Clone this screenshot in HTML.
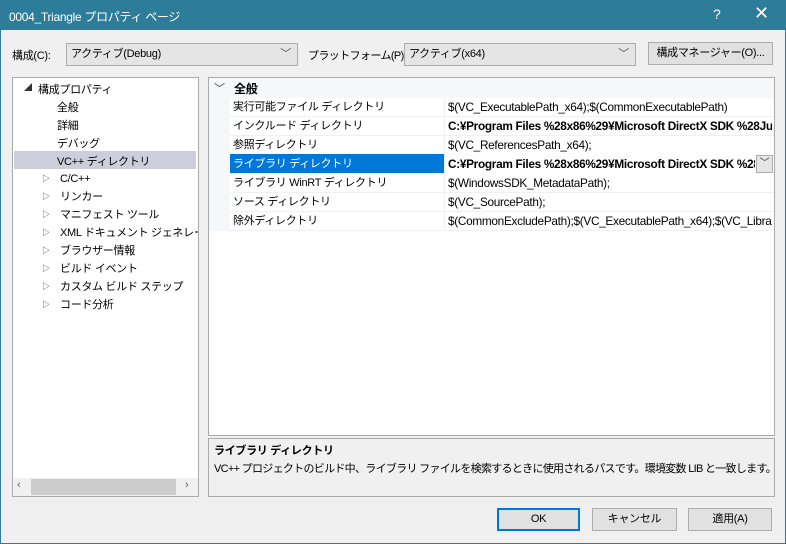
<!DOCTYPE html>
<html><head><meta charset="utf-8"><style>
*{margin:0;padding:0;box-sizing:border-box}
body{width:786px;height:544px;background:#f0f0f0;font-family:"Liberation Sans","Noto Sans CJK JP",sans-serif;font-size:11px;letter-spacing:-0.3px;color:#000;position:relative;overflow:hidden}
.a{position:absolute;white-space:nowrap}
#win{position:absolute;left:0;top:0;width:786px;height:544px;border:1px solid #2d7d9a}
.title{left:0;top:0;width:786px;height:30px;background:#2d7d9a;color:#fff}
.combo{background:#e5e5e5;border:1px solid #adadad;height:23px;line-height:21px;padding-left:4px}
.btn{background:#e1e1e1;border:1px solid #adadad;text-align:center;line-height:21px;height:23px}
.lat{font-size:11.8px;letter-spacing:-0.3px}
.bold{font-weight:bold}
.tree div{height:18px;line-height:18px;overflow:hidden}
.tr{font-size:8px;color:#333;display:inline-block;width:18px;vertical-align:top}
</style></head><body>
<div id="win"></div>
<div class="a title"><span class="a" style="left:9px;top:8px;font-size:12px">0004_Triangle プロパティ ページ</span>
<span class="a" style="left:713px;top:6px;font-size:14px">?</span>
<span class="a" style="left:754px;top:3px;font-size:18px">✕</span></div>

<span class="a" style="left:12px;top:47px">構成(C):</span>
<div class="a combo" style="left:66px;top:43px;width:232px">アクティブ(Debug)<span class="a" style="right:6px;top:0;color:#555">﹀</span></div>
<span class="a" style="left:308px;top:47px;letter-spacing:-0.6px">プラットフォーム(P):</span>
<div class="a combo" style="left:404px;top:43px;width:232px">アクティブ(x64)<span class="a" style="right:6px;top:0;color:#555">﹀</span></div>
<div class="a btn" style="left:648px;top:42px;width:125px">構成マネージャー(O)...</div>

<div class="a" style="left:12px;top:77px;width:187px;height:420px;background:#fff;border:1px solid #aaa"></div>
<div class="a" style="left:14px;top:151px;width:182px;height:18px;background:#cccedb"></div>
<span class="a" style="left:24px;top:82px;font-size:8px;color:#333">◢</span>
<span class="a" style="left:38px;top:81px">構成プロパティ</span>
<span class="a" style="left:57px;top:99px">全般</span>
<span class="a" style="left:57px;top:117px">詳細</span>
<span class="a" style="left:57px;top:135px">デバッグ</span>
<span class="a" style="left:57px;top:153px">VC++ ディレクトリ</span>
<div class="a tree" style="left:42px;top:170px;width:156px;overflow:hidden">
<div><span class="tr">▷</span>C/C++</div><div><span class="tr">▷</span>リンカー</div><div><span class="tr">▷</span>マニフェスト ツール</div><div><span class="tr">▷</span>XML ドキュメント ジェネレーター</div><div><span class="tr">▷</span>ブラウザー情報</div><div><span class="tr">▷</span>ビルド イベント</div><div><span class="tr">▷</span>カスタム ビルド ステップ</div><div><span class="tr">▷</span>コード分析</div></div>
<div class="a" style="left:13px;top:478px;width:185px;height:18px;background:#f0f0f0"></div>
<div class="a" style="left:31px;top:479px;width:145px;height:16px;background:#cdcdcd"></div>
<span class="a" style="left:17px;top:479px;color:#606060">‹</span>
<span class="a" style="left:185px;top:479px;color:#606060">›</span>

<div class="a" style="left:208px;top:77px;width:567px;height:359px;background:#fff;border:1px solid #aaa"></div>
<div class="a" style="left:209px;top:78px;width:565px;height:20px;background:#f5f7fa"></div>
<div class="a" style="left:209px;top:98px;width:21px;height:133px;background:#f5f7fa"></div>
<span class="a" style="left:214px;top:80px;color:#444">﹀</span>
<span class="a bold" style="left:234px;top:80px;font-size:12px">全般</span>
<div class="a" style="left:444px;top:98px;width:1px;height:133px;background:#eef0f3"></div>
<div class="a" style="left:230px;top:154px;width:214px;height:19px;background:#0078d7"></div>
<div class="a" style="left:233px;top:98px;line-height:19px">
<div>実行可能ファイル ディレクトリ</div><div>インクルード ディレクトリ</div><div>参照ディレクトリ</div><div style="color:#fff">ライブラリ ディレクトリ</div><div>ライブラリ WinRT ディレクトリ</div><div>ソース ディレクトリ</div><div>除外ディレクトリ</div></div>
<div class="a lat" style="left:448px;top:98px;line-height:19px;width:324px;overflow:hidden">
<div>$(VC_ExecutablePath_x64);$(CommonExecutablePath)</div><div class="bold">C:¥Program Files %28x86%29¥Microsoft DirectX SDK %28Ju</div><div>$(VC_ReferencesPath_x64);</div><div class="bold" style="width:307px;overflow:hidden">C:¥Program Files %28x86%29¥Microsoft DirectX SDK %28Ju</div><div>$(WindowsSDK_MetadataPath);</div><div>$(VC_SourcePath);</div><div>$(CommonExcludePath);$(VC_ExecutablePath_x64);$(VC_Libra</div></div>
<div class="a" style="left:230px;top:116px;width:544px;border-top:1px solid #eef0f3;height:0"></div>
<div class="a" style="left:230px;top:135px;width:544px;border-top:1px solid #eef0f3;height:0"></div>
<div class="a" style="left:230px;top:192px;width:544px;border-top:1px solid #eef0f3;height:0"></div>
<div class="a" style="left:230px;top:211px;width:544px;border-top:1px solid #eef0f3;height:0"></div>
<div class="a" style="left:230px;top:230px;width:544px;border-top:1px solid #eef0f3;height:0"></div>
<div class="a" style="left:756px;top:155px;width:17px;height:18px;background:#e5e5e5;border:1px solid #adadad;font-size:10px;text-align:center;line-height:16px;color:#333">﹀</div>

<div class="a" style="left:208px;top:438px;width:567px;height:59px;border:1px solid #aaa;background:#f0f0f0"></div>
<span class="a bold" style="left:214px;top:442px">ライブラリ ディレクトリ</span>
<span class="a" style="left:214px;top:460px;letter-spacing:-0.7px">VC++ プロジェクトのビルド中、ライブラリ ファイルを検索するときに使用されるパスです。環境変数 LIB と一致します。</span>

<div class="a btn" style="left:497px;top:508px;width:83px;border:2px solid #0078d7;line-height:19px">OK</div>
<div class="a btn" style="left:592px;top:508px;width:85px">キャンセル</div>
<div class="a btn" style="left:688px;top:508px;width:84px">適用(A)</div>
</body></html>
